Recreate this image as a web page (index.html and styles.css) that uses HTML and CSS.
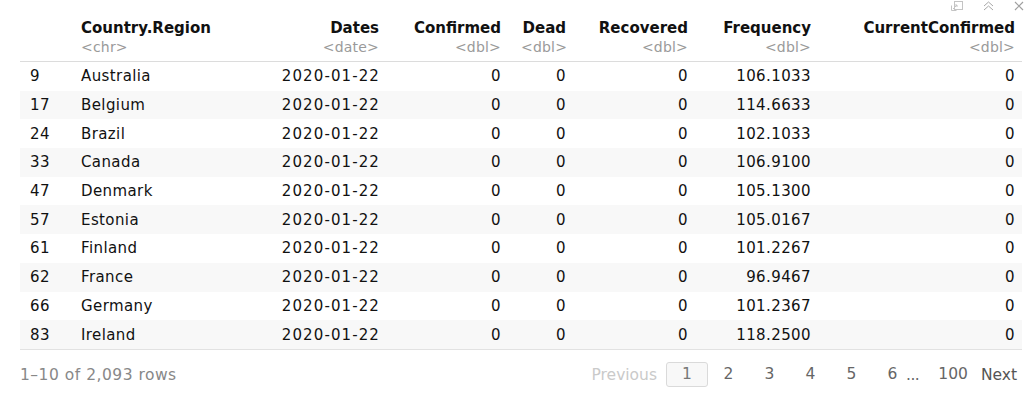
FILE: index.html
```html
<!DOCTYPE html>
<html>
<head>
<meta charset="utf-8">
<link rel="stylesheet" href="styles.css">
</head>
<body>
<div class="viewer">
  <div class="tools">
    <svg class="tool-icon" width="12" height="10" viewBox="0 0 12 10"><rect x="3.5" y="0.5" width="8" height="8" fill="none" stroke="#c4c4c4"/><path d="M0.5 4.5v5h5" fill="none" stroke="#c4c4c4"/><path d="M2 8l4-4M4 4h2v2" fill="none" stroke="#c4c4c4"/></svg>
    <svg class="tool-icon" width="11" height="10" viewBox="0 0 11 10"><path d="M1 5l4.5-4 4.5 4M1 9l4.5-4 4.5 4" fill="none" stroke="#a8a8a8" stroke-width="1"/></svg>
    <svg class="tool-icon" width="10" height="10" viewBox="0 0 10 10"><path d="M1 1l8 8M9 1l-8 8" fill="none" stroke="#a0a0a0" stroke-width="1.2"/></svg>
  </div>
  <table class="grid">
    <colgroup>
      <col class="c-idx"><col class="c-country"><col class="c-date"><col class="c-conf"><col class="c-dead"><col class="c-rec"><col class="c-freq"><col class="c-cur">
    </colgroup>
    <thead>
      <tr>
        <th class="left"></th>
        <th class="left"><div class="name">Country.Region</div><div class="type">&lt;chr&gt;</div></th>
        <th><div class="name">Dates</div><div class="type">&lt;date&gt;</div></th>
        <th><div class="name">Confirmed</div><div class="type">&lt;dbl&gt;</div></th>
        <th><div class="name">Dead</div><div class="type">&lt;dbl&gt;</div></th>
        <th><div class="name">Recovered</div><div class="type">&lt;dbl&gt;</div></th>
        <th><div class="name">Frequency</div><div class="type">&lt;dbl&gt;</div></th>
        <th class="last"><div class="name">CurrentConfirmed</div><div class="type">&lt;dbl&gt;</div></th>
      </tr>
    </thead>
    <tbody>
      <tr><td class="left">9</td><td class="left">Australia</td><td class="date">2020-01-22</td><td>0</td><td>0</td><td>0</td><td>106.1033</td><td class="last">0</td></tr>
      <tr><td class="left">17</td><td class="left">Belgium</td><td class="date">2020-01-22</td><td>0</td><td>0</td><td>0</td><td>114.6633</td><td class="last">0</td></tr>
      <tr><td class="left">24</td><td class="left">Brazil</td><td class="date">2020-01-22</td><td>0</td><td>0</td><td>0</td><td>102.1033</td><td class="last">0</td></tr>
      <tr><td class="left">33</td><td class="left">Canada</td><td class="date">2020-01-22</td><td>0</td><td>0</td><td>0</td><td>106.9100</td><td class="last">0</td></tr>
      <tr><td class="left">47</td><td class="left">Denmark</td><td class="date">2020-01-22</td><td>0</td><td>0</td><td>0</td><td>105.1300</td><td class="last">0</td></tr>
      <tr><td class="left">57</td><td class="left">Estonia</td><td class="date">2020-01-22</td><td>0</td><td>0</td><td>0</td><td>105.0167</td><td class="last">0</td></tr>
      <tr><td class="left">61</td><td class="left">Finland</td><td class="date">2020-01-22</td><td>0</td><td>0</td><td>0</td><td>101.2267</td><td class="last">0</td></tr>
      <tr><td class="left">62</td><td class="left">France</td><td class="date">2020-01-22</td><td>0</td><td>0</td><td>0</td><td>96.9467</td><td class="last">0</td></tr>
      <tr><td class="left">66</td><td class="left">Germany</td><td class="date">2020-01-22</td><td>0</td><td>0</td><td>0</td><td>101.2367</td><td class="last">0</td></tr>
      <tr><td class="left">83</td><td class="left">Ireland</td><td class="date">2020-01-22</td><td>0</td><td>0</td><td>0</td><td>118.2500</td><td class="last">0</td></tr>
    </tbody>
  </table>
  <div class="footer">
    <div class="info">1–10 of 2,093 rows</div>
    <div class="pager">
      <span class="prev">Previous</span>
      <span class="page current">1</span>
      <span class="page">2</span>
      <span class="page">3</span>
      <span class="page">4</span>
      <span class="page">5</span>
      <span class="page">6</span>
      <span class="ellipsis">...</span>
      <span class="page wide">100</span>
      <span class="next">Next</span>
    </div>
  </div>
</div>
</body>
</html>
```
FILE: styles.css
```css
html, body {
  margin: 0;
  padding: 0;
  background: #ffffff;
}
body {
  font-family: "DejaVu Sans", "Liberation Sans", sans-serif;
  font-size: 15px;
  color: #111;
}
.viewer {
  position: relative;
  width: 1002px;
  margin-left: 20px;
  padding-top: 19px;
}
.tools {
  position: absolute;
  top: 1px;
  right: -2px;
  display: flex;
  gap: 20px;
  align-items: center;
}
.tool-icon { display: block; }
.grid {
  width: 1002px;
  table-layout: fixed;
  border-collapse: collapse;
}
.c-idx { width: 51px; }
.c-country { width: 179px; }
.c-date { width: 139px; }
.c-conf { width: 122px; }
.c-dead { width: 65px; }
.c-rec { width: 122px; }
.c-freq { width: 123px; }
.c-cur { width: 201px; }
.grid th, .grid td {
  padding: 0 10px;
  text-align: right;
  white-space: nowrap;
  letter-spacing: 0.4px;
}
.grid th.left, .grid td.left { text-align: left; }
.grid th.last, .grid td.last { padding-right: 7px; }
.grid td.date { letter-spacing: 1.1px; padding-right: 9px; }
.grid thead th {
  padding-bottom: 5px;
  border-bottom: 1px solid #dcdcdc;
  vertical-align: bottom;
}
.name {
  font-weight: bold;
  font-size: 15px;
  letter-spacing: 0;
  line-height: 19px;
  color: #111;
}
.type {
  font-weight: normal;
  font-size: 14px;
  letter-spacing: 0.2px;
  line-height: 18px;
  color: #9a9a9a;
}
.grid tbody td {
  height: 28.7px;
  line-height: 18px;
}
.grid tbody tr:nth-child(even) td { background: #f8f8f8; }
.grid tbody tr:last-child td { border-bottom: 1px solid #e2e2e2; }
.footer {
  display: flex;
  justify-content: space-between;
  align-items: center;
  height: 50px;
}
.info {
  color: #888;
  font-size: 15.5px;
  letter-spacing: 0.5px;
}
.pager {
  display: flex;
  align-items: center;
  font-size: 15.5px;
  color: #666;
  padding-right: 5px;
}
.prev {
  color: #cacaca;
  margin-right: 9px;
}
.page {
  width: 41px;
  height: 25px;
  line-height: 25px;
  text-align: center;
  box-sizing: border-box;
}
.page.current {
  width: 42px;
  border: 1px solid #dadada;
  border-radius: 3px;
  background: #f8f8f8;
  line-height: 23px;
  color: #777;
}
.ellipsis {
  margin-left: -7px;
  letter-spacing: -0.5px;
}
.page.wide {
  width: auto;
  padding: 0 13px 0 19px;
}
.next { color: #555; }
```
